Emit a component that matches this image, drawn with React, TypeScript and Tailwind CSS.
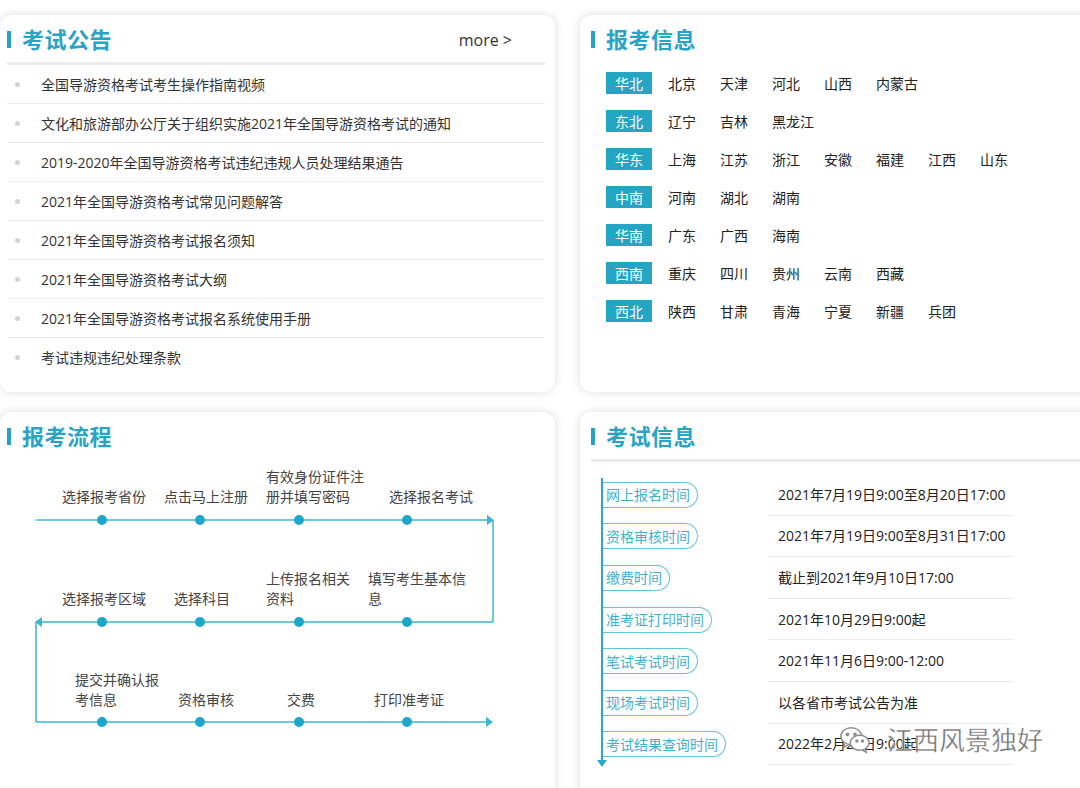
import React from "react";

const notices = [
  "全国导游资格考试考生操作指南视频",
  "文化和旅游部办公厅关于组织实施2021年全国导游资格考试的通知",
  "2019-2020年全国导游资格考试违纪违规人员处理结果通告",
  "2021年全国导游资格考试常见问题解答",
  "2021年全国导游资格考试报名须知",
  "2021年全国导游资格考试大纲",
  "2021年全国导游资格考试报名系统使用手册",
  "考试违规违纪处理条款",
];

const regions: { name: string; cities: string[] }[] = [
  { name: "华北", cities: ["北京", "天津", "河北", "山西", "内蒙古"] },
  { name: "东北", cities: ["辽宁", "吉林", "黑龙江"] },
  { name: "华东", cities: ["上海", "江苏", "浙江", "安徽", "福建", "江西", "山东"] },
  { name: "中南", cities: ["河南", "湖北", "湖南"] },
  { name: "华南", cities: ["广东", "广西", "海南"] },
  { name: "西南", cities: ["重庆", "四川", "贵州", "云南", "西藏"] },
  { name: "西北", cities: ["陕西", "甘肃", "青海", "宁夏", "新疆", "兵团"] },
];

// flow labels on the diagram canvas; bottom edge sits just above each line
const steps: { text: string; cls: string }[] = [
  { text: "选择报考省份", cls: "left-[62px] bottom-[222px] w-[90px]" },
  { text: "点击马上注册", cls: "left-[164px] bottom-[222px] w-[90px]" },
  { text: "有效身份证件注册并填写密码", cls: "left-[266px] bottom-[222px] w-[100px]" },
  { text: "选择报名考试", cls: "left-[389px] bottom-[222px] w-[90px]" },
  { text: "选择报考区域", cls: "left-[62px] bottom-[120px] w-[90px]" },
  { text: "选择科目", cls: "left-[174px] bottom-[120px] w-[90px]" },
  { text: "上传报名相关资料", cls: "left-[266px] bottom-[120px] w-[90px]" },
  { text: "填写考生基本信息", cls: "left-[368px] bottom-[120px] w-[100px]" },
  { text: "提交并确认报考信息", cls: "left-[75px] bottom-[19px] w-[90px]" },
  { text: "资格审核", cls: "left-[178px] bottom-[19px] w-[90px]" },
  { text: "交费", cls: "left-[287px] bottom-[19px] w-[90px]" },
  { text: "打印准考证", cls: "left-[374px] bottom-[19px] w-[90px]" },
];

const schedule = [
  ["网上报名时间", "2021年7月19日9:00至8月20日17:00"],
  ["资格审核时间", "2021年7月19日9:00至8月31日17:00"],
  ["缴费时间", "截止到2021年9月10日17:00"],
  ["准考证打印时间", "2021年10月29日9:00起"],
  ["笔试考试时间", "2021年11月6日9:00-12:00"],
  ["现场考试时间", "以各省市考试公告为准"],
  ["考试结果查询时间", "2022年2月21日9:00起"],
];

const card = "rounded-[12px] bg-white shadow-[0_0_10px_rgba(0,0,0,0.13)]";

function Title({ text }: { text: string }) {
  return (
    <div className="flex items-center h-[47px] pt-[2px]">
      <span className="w-[4px] h-[17px] bg-[#25a3c3]" />
      <h2 className="ml-[11px] text-[22px] font-bold text-[#29a4c4] tracking-[0.5px]">{text}</h2>
    </div>
  );
}

function Flow() {
  const xs = [102, 200, 299, 407];
  const ys = [61, 163, 263];
  const c = "#3db4d4";
  return (
    <div className="relative h-[270px]">
      <svg className="absolute left-0 top-0" width="520" height="270">
        <line x1="36" y1={ys[0]} x2="490" y2={ys[0]} stroke={c} strokeWidth="1.5" />
        <polygon points={`487,${ys[0] - 5} 494,${ys[0]} 487,${ys[0] + 5}`} fill={c} />
        <line x1="493" y1={ys[0]} x2="493" y2={ys[1]} stroke={c} strokeWidth="1.5" />
        <line x1="39" y1={ys[1]} x2="493" y2={ys[1]} stroke={c} strokeWidth="1.5" />
        <polygon points={`42,${ys[1] - 5} 35,${ys[1]} 42,${ys[1] + 5}`} fill={c} />
        <line x1="36" y1={ys[1]} x2="36" y2={ys[2]} stroke={c} strokeWidth="1.5" />
        <line x1="36" y1={ys[2]} x2="488" y2={ys[2]} stroke={c} strokeWidth="1.5" />
        <polygon points={`486,${ys[2] - 5} 493,${ys[2]} 486,${ys[2] + 5}`} fill={c} />
        {ys.map((y) => xs.map((x) => <circle key={`${x}-${y}`} cx={x} cy={y} r="5" fill="#1ea7c9" />))}
      </svg>
      {steps.map((s) => (
        <p key={s.text} className={`absolute ${s.cls} text-[14px] leading-[20px] text-[#444] break-all`}>
          {s.text}
        </p>
      ))}
    </div>
  );
}

export default function App() {
  return (
    <div
      className="w-[1080px] h-[788px] overflow-hidden bg-white pt-[15px]"
      style={{ fontFamily: '"Open Sans","Noto Sans CJK SC",sans-serif' }}
    >
      <div className="grid grid-cols-[555px_540px] grid-rows-[377px_400px] gap-x-[25px] gap-y-[20px]">
        {/* 考试公告 */}
        <section className={`${card} pl-[7px] pr-[10px]`}>
          <div className="flex items-center justify-between">
            <Title text="考试公告" />
            <span className="mr-[33px] mt-[3px] text-[16px] text-[#333]">more &gt;</span>
          </div>
          <div className="h-[3px] bg-[#ececec]" />
          <ul>
            {notices.map((n, i) => (
              <li
                key={n}
                className={`flex items-center h-[39px] ${i < notices.length - 1 ? "border-b border-[#ececec]" : ""}`}
              >
                <span className="ml-[8px] w-[5px] h-[5px] rounded-full bg-[#d4d4d4]" />
                <span className="ml-[21px] text-[14px] text-[#333]">{n}</span>
              </li>
            ))}
          </ul>
        </section>

        {/* 报考信息 */}
        <section className={`${card} pl-[11px]`}>
          <Title text="报考信息" />
          <div className="mt-[10px] flex flex-col gap-[16px]">
            {regions.map((r) => (
              <div key={r.name} className="flex items-center h-[22px]">
                <span className="ml-[15px] w-[46px] h-[22px] flex items-center justify-center bg-[#25a5c4] text-white text-[14px]">
                  {r.name}
                </span>
                <div className="ml-[16px] flex">
                  {r.cities.map((c) => (
                    <span key={c} className="w-[52px] text-[14px] text-[#222]">
                      {c}
                    </span>
                  ))}
                </div>
              </div>
            ))}
          </div>
        </section>

        {/* 报考流程 */}
        <section className={`${card} pl-[7px]`}>
          <Title text="报考流程" />
          <div className="-ml-[7px]">
            <Flow />
          </div>
        </section>

        {/* 考试信息 */}
        <section className={`${card} relative pl-[11px]`}>
          <Title text="考试信息" />
          <div className="h-[3px] bg-[#ececec]" />
          <div className="relative ml-[10px] mt-[12px] w-[420px]">
            <span className="absolute left-0 top-[4px] bottom-[4px] w-[2px] bg-[#2aa8c8]" />
            <span className="absolute -left-[4px] -bottom-[2px] w-0 h-0 border-l-[5px] border-r-[5px] border-t-[7px] border-l-transparent border-r-transparent border-t-[#2aa8c8]" />
            {schedule.map(([k, v]) => (
              <div key={k} className="flex items-stretch h-[41.6px]">
                <div className="w-[167px] flex items-center pl-[2px]">
                  <span className="h-[26px] flex items-center pl-[3px] pr-[7px] rounded-r-full border-[1.5px] border-l-0 border-[#62c3dc] text-[14px] text-[#3fb1cf]">
                    {k}
                  </span>
                </div>
                <div className="w-[245px] flex items-center pl-[10px] border-b border-[#ececec] text-[14px] text-[#222]">
                  {v}
                </div>
              </div>
            ))}
          </div>

          {/* watermark */}
          <div className="absolute left-[259px] top-[312px] flex items-center gap-[16px] text-[#6e6e6e]">
            <svg width="32" height="32" viewBox="0 0 34 30" fill="none" stroke="#8e8e8e" strokeWidth="1.6">
              <ellipse cx="13" cy="11" rx="11" ry="9" fill="white" />
              <path d="M6 19 L5 23 L10 20" fill="white" />
              <ellipse cx="22" cy="18" rx="10" ry="8" fill="white" />
              <path d="M28 25 L29 28 L25 26" fill="white" />
              <circle cx="9" cy="9" r="1.2" fill="#8e8e8e" />
              <circle cx="17" cy="9" r="1.2" fill="#8e8e8e" />
              <circle cx="19" cy="16" r="1" fill="#8e8e8e" />
              <circle cx="25" cy="16" r="1" fill="#8e8e8e" />
            </svg>
            <span
              className="text-[26px] font-normal leading-[32px]"
              style={{ WebkitTextStroke: "0.4px #fff" }}
            >
              江西风景独好
            </span>
          </div>
        </section>
      </div>
    </div>
  );
}
